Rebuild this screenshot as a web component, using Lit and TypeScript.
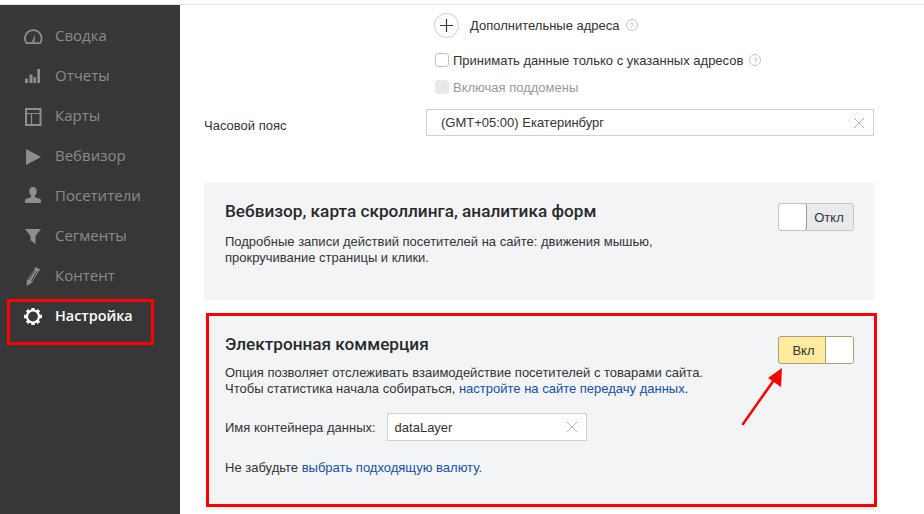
import { LitElement, html, css, svg } from "lit";
import { customElement } from "lit/decorators.js";

const icons: Record<string, unknown> = {
  gauge: svg`<path d="M2.500 17.200A8.300 8.300 0 1 1 16 17.200Z" fill="none" stroke="currentColor" stroke-width="1.800" stroke-linejoin="round"/><path d="M8 16 10.800 8.500 10.600 16Z" fill="currentColor"/>`,
  bars: svg`<path d="M1 12.500h3V17H1zM5.500 8.500h3V17h-3zM9.500 11h2.500v6H9.500zM13.300 3H16v14h-2.700z" fill="currentColor"/>`,
  map: svg`<path d="M2 3h14.500v16H2z" fill="none" stroke="currentColor" stroke-width="2"/><path d="M2 7.500h14.500M7.500 7.500V19" fill="none" stroke="currentColor" stroke-width="1.200"/>`,
  play: svg`<path d="M2 3 17 11 2 19Z" fill="currentColor"/>`,
  user: svg`<path d="M9 1c2.700 0 3.800 2 3.800 4.200 0 1.900-.8 3.500-1.800 4.400v1.700c2.300.9 6 1.200 6 3.300V17H1v-2.400c0-2.100 3.700-2.400 6-3.300V9.600C6 8.700 5.200 7.100 5.200 5.200 5.200 3 6.300 1 9 1Z" fill="currentColor"/>`,
  filter: svg`<path d="M1 3h16l-5.500 7V18l-5-3.800V10Z" fill="currentColor"/>`,
  pencil: svg`<path d="M11.800 1 16 3.500 7.500 17 2.500 20l.4-5.600Z" fill="currentColor"/><path d="M4.800 14 10.800 3.800M7.300 15.300 13.300 5" stroke="#373737" stroke-width=".9"/>`,
  gear: svg`<circle cx="9" cy="10.500" r="6" fill="none" stroke="currentColor" stroke-width="2.200"/><path d="M7.300 2h3.400v2.800H7.300zM7.300 16.200h3.400V19H7.300zM0 8.800h2.800v3.400H0zM15.200 8.800H18v3.400h-2.800zM1.800 5.300 4.200 3l2 2L3.800 7.300zM11.800 5l2-2 2.400 2.300-2 2zM1.800 15.700 4.200 18l2-2-2.400-2.300zM11.800 16l2 2 2.400-2.300-2-2z" fill="currentColor"/>`,
};

const nav = [
  ["gauge", "Сводка"],
  ["bars", "Отчеты"],
  ["map", "Карты"],
  ["play", "Вебвизор"],
  ["user", "Посетители"],
  ["filter", "Сегменты"],
  ["pencil", "Контент"],
  ["gear", "Настройка"],
];

const help = html`<span class="help">?</span>`;
const cross = html`<svg class="cross" viewBox="0 0 12 12" width="12" height="12"><path d="M1 1l10 10M11 1 1 11" stroke="#b5b5b5" stroke-width="1" fill="none"/></svg>`;

@customElement("app-root")
export class AppRoot extends LitElement {
  static styles = css`
    :host { display: block; width: 924px; height: 514px; overflow: hidden; position: relative; background: #fff; font-family: "Liberation Sans", Arial, sans-serif; color: #333; }
    .shell { display: flex; height: 514px; padding-top: 5px; box-sizing: border-box; }
    .topline { position: absolute; left: 0; right: 0; top: 4px; height: 1px; background: #e2e2e2; }
    .side { width: 180px; flex: none; background: #373737; padding-top: 11px; box-sizing: border-box; }
    .item { height: 40px; display: flex; align-items: center; padding-left: 24px; gap: 11px; color: #8b8b8b; font: 15px/38px "Open Sans", sans-serif; }
    .item span { margin-top: -3px; }
    .item svg { width: 20px; height: 20px; flex: none; color: #8e8e8e; }
    .item.on { color: #fff; font-weight: 600; font-size: 14.400px; }
    .item.on span { margin-top: -1px; }
    .item.on svg { color: #fff; }
    .main { flex: 1; padding: 0 50px 0 24px; min-width: 0; }
    .form { padding-left: 222px; }
    .add { display: flex; align-items: center; height: 32px; margin: 4px 0 0 8px; font-size: 13px; }
    .plus { width: 25px; height: 25px; border: 1px solid #cfcfcf; border-radius: 50%; display: flex; align-items: center; justify-content: center; margin-right: 11px; box-sizing: border-box; }
    .help { display: inline-flex; width: 12px; height: 12px; margin-left: 6px; border: 1px solid #c4c4c4; border-radius: 50%; align-items: center; justify-content: center; font-size: 8px; color: #b5b5b5; box-sizing: border-box; }
    .check { display: flex; align-items: center; height: 20px; margin: 9px 0 0 9px; font-size: 13px; }
    .box { width: 12px; height: 12px; border: 1px solid #c4c4c4; border-radius: 3px; margin-right: 4px; background: #fff; flex: none; }
    .check.off { color: #9a9a9a; margin-top: 7px; }
    .check.off .box { background: #e8e8e8; border-color: #e8e8e8; }
    .tz { display: flex; align-items: center; margin-top: 12px; height: 27px; }
    .tz label { width: 222px; font-size: 13px; flex: none; padding-top: 6px; }
    .input { display: flex; align-items: center; justify-content: space-between; border: 1px solid #d0d0d0; background: #fff; box-sizing: border-box; height: 27px; padding: 0 8px 0 14px; font-size: 13px; }
    .tz .input { flex: 1; }
    .card { background: #f3f4f6; padding: 18px 20px 18px 21px; box-sizing: border-box; display: flex; justify-content: space-between; }
    .c1 { height: 117px; margin-top: 47px; }
    .c2 { height: 195px; margin-top: 15px; padding-top: 19px; }
    h3 { margin: 0 0 13px; font: 500 17.200px/20px Roboto, sans-serif; color: #2a2a2a; }
    .c2 h3 { margin-bottom: 11px; }
    p { margin: 0; font-size: 13px; line-height: 16px; }
    a { color: #1450a8; text-decoration: none; }
    .tog { display: flex; width: 76px; height: 28px; box-sizing: border-box; border: 1px solid #c6c6c6; border-radius: 3px; font-size: 13px; overflow: hidden; flex: none; margin-top: 2px; }
    .tog i { width: 27px; background: #fff; flex: none; }
    .tog span { flex: 1; display: flex; align-items: center; justify-content: center; }
    .tog.off { background: #e9eaec; }
    .tog.off span { padding-right: 2px; }
    .tog.off i { border: 1px solid #999; border-radius: 3px; margin: -1px 0 -1px -1px; }
    .tog.on { background: #ffeba0; border-color: #ae9f6e; }
    .tog.on span { padding-left: 3px; }
    .tog.on i { border-left: 1px solid #ae9f6e; }
    .row { display: flex; align-items: center; margin-top: 16px; font-size: 13px; gap: 11px; }
    .row .input { width: 200px; height: 28px; padding-left: 7px; }
    .note { margin-top: 19px; }
    .rbox { position: absolute; border: 3px solid #f00; box-sizing: border-box; }
    .arrow { position: absolute; left: 738px; top: 362px; }
  `;

  render() {
    return html`
      <div class="shell">
        <nav class="side">
          ${nav.map(([i, t]) => html`<div class="item ${t === "Настройка" ? "on" : ""}"><svg viewBox="0 0 20 20">${icons[i]}</svg><span>${t}</span></div>`)}
        </nav>
        <main class="main">
          <div class="form">
            <div class="add"><span class="plus"><svg width="13" height="13" viewBox="0 0 13 13"><path d="M6.500 0v13M0 6.500h13" stroke="#333" stroke-width="1.200"/></svg></span>Дополнительные адреса ${help}</div>
            <div class="check"><span class="box"></span>Принимать данные только с указанных адресов ${help}</div>
            <div class="check off"><span class="box"></span>Включая поддомены</div>
          </div>
          <div class="tz"><label>Часовой пояс</label><div class="input"><span>(GMT+05:00) Екатеринбург</span>${cross}</div></div>
          <section class="card c1">
            <div><h3>Вебвизор, карта скроллинга, аналитика форм</h3><p>Подробные записи действий посетителей на сайте: движения мышью,<br />прокручивание страницы и клики.</p></div>
            <div class="tog off"><i></i><span>Откл</span></div>
          </section>
          <section class="card c2">
            <div>
              <h3>Электронная коммерция</h3>
              <p>Опция позволяет отслеживать взаимодействие посетителей с товарами сайта.<br />Чтобы статистика начала собираться, <a>настройте на сайте передачу данных</a>.</p>
              <div class="row"><span>Имя контейнера данных:</span><div class="input"><span>dataLayer</span>${cross}</div></div>
              <p class="note">Не забудьте <a>выбрать подходящую валюту.</a></p>
            </div>
            <div class="tog on"><span>Вкл</span><i></i></div>
          </section>
        </main>
      </div>
      <div class="topline"></div>
      <div class="rbox" style="left:7px;top:299px;width:147px;height:46px"></div>
      <div class="rbox" style="left:206px;top:313px;width:671px;height:194px"></div>
      <svg class="arrow" width="50" height="66" viewBox="0 0 50 66"><path d="M5 62 36 18" stroke="#f00" stroke-width="2.500" stroke-linecap="round"/><path d="M44 6 43 25 30 16Z" fill="#f00"/></svg>
    `;
  }
}
